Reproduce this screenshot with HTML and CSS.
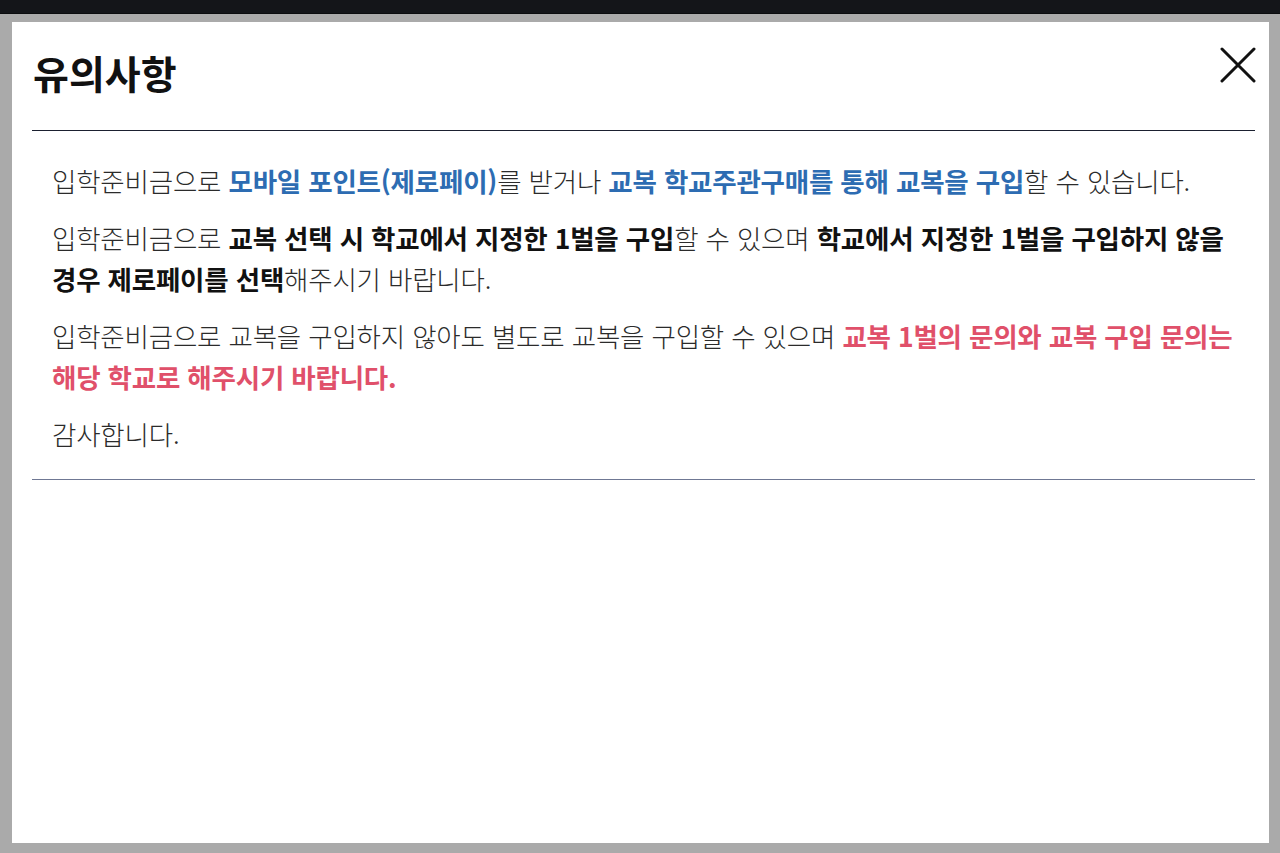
FILE: index.html
```html
<!DOCTYPE html>
<html lang="ko">
<head>
<meta charset="utf-8">
<title>유의사항</title>
<link rel="stylesheet" href="styles.css">
</head>
<body>
<div class="topbar"></div>
<div class="backdrop">
  <div class="modal">
    <div class="modal-header">
      <h1 class="modal-title">유의사항</h1>
      <button class="close-btn" aria-label="닫기">
        <svg width="36" height="36" viewBox="0 0 36 36"><path d="M2 2 L34 34 M34 2 L2 34" stroke="#111" stroke-width="3" fill="none" stroke-linecap="round"/></svg>
      </button>
    </div>
    <div class="modal-body">
      <p>입학준비금으로 <strong class="blue">모바일 포인트(제로페이)</strong>를 받거나 <strong class="blue">교복 학교주관구매를 통해 교복을 구입</strong>할 수 있습니다.</p>
      <p>입학준비금으로 <strong>교복 선택 시 학교에서 지정한 1벌을 구입</strong>할 수 있으며 <strong>학교에서 지정한 1벌을 구입하지 않을 경우 제로페이를 선택</strong>해주시기 바랍니다.</p>
      <p>입학준비금으로 교복을 구입하지 않아도 별도로 교복을 구입할 수 있으며 <strong class="red">교복 1벌의 문의와 교복 구입 문의는 해당 학교로 해주시기 바랍니다.</strong></p>
      <p>감사합니다.</p>
    </div>
  </div>
</div>
</body>
</html>
```

FILE: styles.css
```css
html, body {
  margin: 0;
  padding: 0;
  height: 100%;
}
body {
  background: #aaaaaa;
  font-family: "Noto Sans CJK KR", "Noto Sans", sans-serif;
  display: flex;
  flex-direction: column;
  overflow: hidden;
}
.topbar {
  height: 13px;
  background: #141519;
  border-bottom: 1px solid #0b0c0e;
  flex: none;
}
.backdrop {
  flex: 1;
  padding: 8px 11px 10px 12px;
  display: flex;
  min-height: 0;
}
.modal {
  flex: 1;
  background: #ffffff;
  padding: 0 14px 0 20px;
  display: flex;
  flex-direction: column;
}
.modal-header {
  height: 108px;
  display: flex;
  align-items: center;
  justify-content: space-between;
  border-bottom: 1px solid #1b2030;
}
.modal-title {
  margin: 0;
  padding-left: 1px;
  font-size: 39px;
  font-weight: 700;
  color: #111111;
  letter-spacing: 0;
  line-height: 1;
  position: relative;
  top: -4px;
}
.close-btn {
  background: none;
  border: 0;
  padding: 0;
  margin-right: -1px;
  width: 36px;
  height: 36px;
  cursor: pointer;
  position: relative;
  top: -11px;
}
.close-btn svg {
  display: block;
}
.modal-body {
  padding: 13px 0 9px;
  border-bottom: 1px solid #6f7894;
}
.modal-body p {
  margin: 16px 0;
  padding: 0 20px;
  font-size: 26.5px;
  line-height: 41px;
  font-weight: 300;
  color: #2b2b2b;
  letter-spacing: -0.2px;
  word-break: keep-all;
}
.modal-body strong {
  font-weight: 700;
  color: #111111;
}
.modal-body strong.blue {
  color: #2d6cb2;
}
.modal-body strong.red {
  color: #e0506a;
}
```
